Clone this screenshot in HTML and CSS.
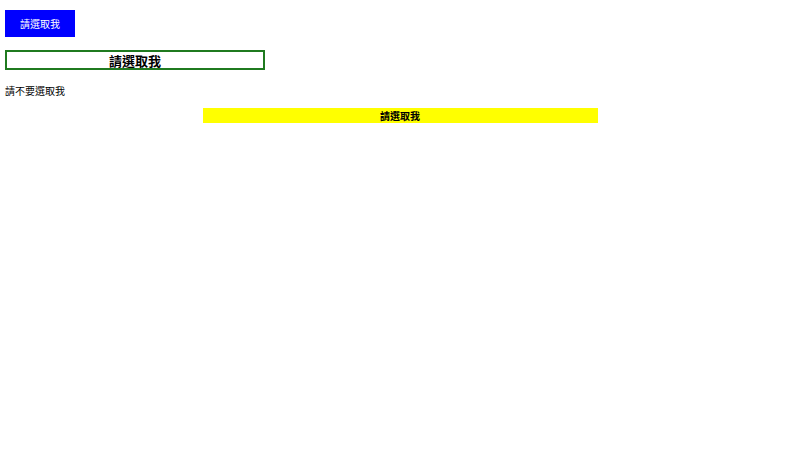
FILE: index.html
```html
<!DOCTYPE html>
<html>
<head>
<meta charset="utf-8">
<link rel="stylesheet" href="styles.css">
</head>
<body>
<div class="btn">請選取我</div>
<div class="boxed">請選取我</div>
<p class="plain">請不要選取我</p>
<div class="bar">請選取我</div>
</body>
</html>
```
FILE: styles.css
```css
html, body { margin: 0; padding: 0; background: #fff; }
body {
  padding: 10px 5px;
  font-family: "Liberation Sans", "Noto Sans CJK TC", sans-serif;
  color: #000;
}
.btn {
  width: 70px;
  height: 27px;
  background: #0000ff;
  color: #fff;
  font-size: 10px;
  display: flex;
  align-items: center;
  justify-content: center;
}
.boxed {
  box-sizing: border-box;
  margin-top: 13px;
  width: 260px;
  height: 20px;
  border: 2px solid #1f7a1f;
  font-size: 13px;
  font-weight: bold;
  display: flex;
  align-items: center;
  justify-content: center;
}
.plain {
  margin: 15px 0 0;
  font-size: 10px;
  line-height: 14px;
}
.bar {
  margin: 9px auto 0;
  width: 395px;
  height: 15px;
  background: #ffff00;
  font-size: 10px;
  font-weight: bold;
  display: flex;
  align-items: center;
  justify-content: center;
}
```
